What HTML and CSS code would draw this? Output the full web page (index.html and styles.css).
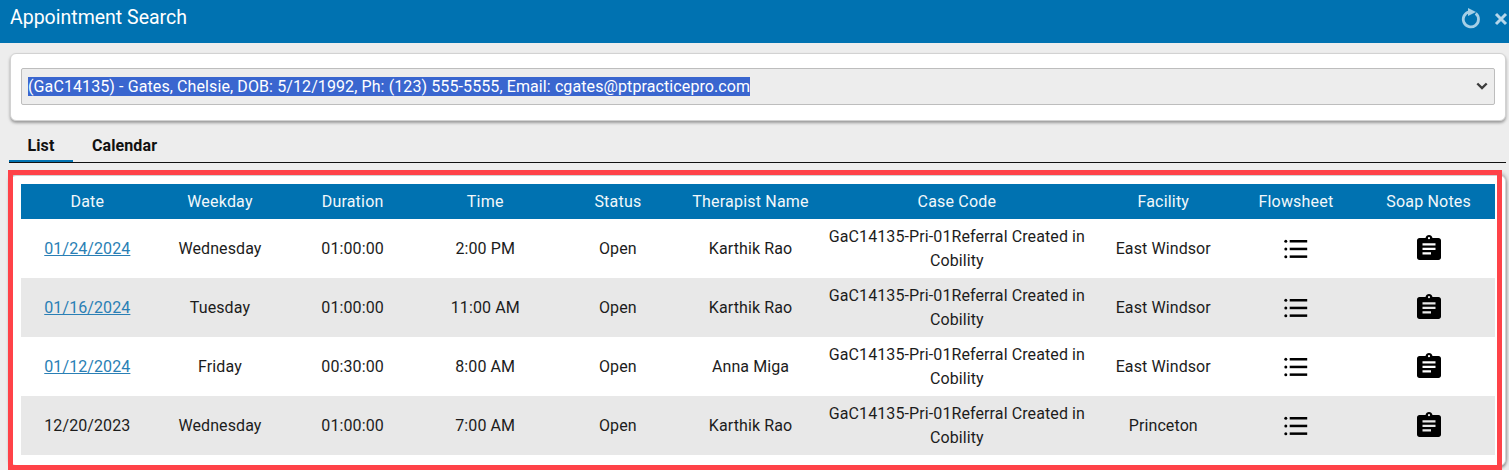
FILE: index.html
```html
<!DOCTYPE html>
<html lang="en">
<head>
<meta charset="utf-8">
<title>Appointment Search</title>
<link rel="stylesheet" href="styles.css">
</head>
<body>
<header class="titlebar">
  <h1 class="title">Appointment Search</h1>
  <div class="title-actions">
    <svg class="icon-refresh" viewBox="0 0 20 21" width="20" height="21"><path d="M8.500 3.800A7.600 7.600 0 1 0 14.700 5.400" fill="none" stroke="#a5cfe6" stroke-width="2.800"/><path d="M7 0L15 4L7 8Z" fill="#a5cfe6"/></svg>
    <svg class="icon-close" viewBox="0 0 14 14" width="14" height="14"><path d="M2 2L12 12M12 2L2 12" fill="none" stroke="#b5d6ea" stroke-width="3"/></svg>
  </div>
</header>
<main class="content">
  <section class="picker-card">
    <div class="picker">
      <span class="picker-value">(GaC14135) - Gates, Chelsie, DOB: 5/12/1992, Ph: (123) 555-5555, Email: cgates@ptpracticepro.com</span>
      <svg class="chevron" viewBox="0 0 12 8" width="12" height="8"><path d="M1.300 1.500L6 6L10.700 1.500" fill="none" stroke="#3c3c3c" stroke-width="2.400"/></svg>
    </div>
  </section>
  <nav class="tabs">
    <a class="tab tab-active">List</a>
    <a class="tab">Calendar</a>
  </nav>
  <section class="results">
    <table class="grid">
      <colgroup>
        <col class="c-std"><col class="c-std"><col class="c-std"><col class="c-std"><col class="c-std"><col class="c-std"><col class="c-case"><col class="c-std"><col class="c-std"><col class="c-std">
      </colgroup>
      <thead>
        <tr><th>Date</th><th>Weekday</th><th>Duration</th><th>Time</th><th>Status</th><th>Therapist Name</th><th>Case Code</th><th>Facility</th><th>Flowsheet</th><th>Soap Notes</th></tr>
      </thead>
      <tbody>
        <tr>
          <td><a class="date-link">01/24/2024</a></td><td>Wednesday</td><td>01:00:00</td><td>2:00 PM</td><td>Open</td><td>Karthik Rao</td><td>GaC14135-Pri-01Referral Created in Cobility</td><td>East Windsor</td>
          <td><svg class="icon" viewBox="0 0 24 24" width="24" height="24"><use href="#list"/></svg></td><td><svg class="icon icon-clip" viewBox="0 0 24 25" width="24" height="25"><use href="#clip"/></svg></td>
        </tr>
        <tr>
          <td><a class="date-link">01/16/2024</a></td><td>Tuesday</td><td>01:00:00</td><td>11:00 AM</td><td>Open</td><td>Karthik Rao</td><td>GaC14135-Pri-01Referral Created in Cobility</td><td>East Windsor</td>
          <td><svg class="icon" viewBox="0 0 24 24" width="24" height="24"><use href="#list"/></svg></td><td><svg class="icon icon-clip" viewBox="0 0 24 25" width="24" height="25"><use href="#clip"/></svg></td>
        </tr>
        <tr>
          <td><a class="date-link">01/12/2024</a></td><td>Friday</td><td>00:30:00</td><td>8:00 AM</td><td>Open</td><td>Anna Miga</td><td>GaC14135-Pri-01Referral Created in Cobility</td><td>East Windsor</td>
          <td><svg class="icon" viewBox="0 0 24 24" width="24" height="24"><use href="#list"/></svg></td><td><svg class="icon icon-clip" viewBox="0 0 24 25" width="24" height="25"><use href="#clip"/></svg></td>
        </tr>
        <tr>
          <td>12/20/2023</td><td>Wednesday</td><td>01:00:00</td><td>7:00 AM</td><td>Open</td><td>Karthik Rao</td><td>GaC14135-Pri-01Referral Created in Cobility</td><td>Princeton</td>
          <td><svg class="icon" viewBox="0 0 24 24" width="24" height="24"><use href="#list"/></svg></td><td><svg class="icon icon-clip" viewBox="0 0 24 25" width="24" height="25"><use href="#clip"/></svg></td>
        </tr>
      </tbody>
    </table>
  </section>
  <div class="highlight"></div>
</main>
<svg class="defs" width="0" height="0">
  <symbol id="list" viewBox="0 0 24 24">
    <circle cx="1.800" cy="4.300" r="1.500"/><circle cx="1.800" cy="12" r="1.500"/><circle cx="1.800" cy="19.700" r="1.500"/>
    <rect x="5.700" y="3" width="17.500" height="2.500"/><rect x="5.700" y="10.700" width="17.500" height="2.500"/><rect x="5.700" y="18.400" width="17.500" height="2.500"/>
  </symbol>
  <symbol id="clip" viewBox="0 0 24 25">
    <path fill-rule="evenodd" d="M2.500 3h6C8.900 1.200 10.300 0 12 0s3.100 1.200 3.500 3h6C22.900 3 24 4.100 24 5.500v17c0 1.400-1.100 2.500-2.500 2.500h-19C1.100 25 0 23.900 0 22.500v-17C0 4.100 1.100 3 2.500 3ZM12 2.100a1.100 1.100 0 1 0 0 2.200a1.100 1.100 0 0 0 0-2.200ZM5.500 8.300v2.200h13V8.300ZM5.500 12.800v2.200h13v-2.200ZM5.500 17.300v2.200h8.500v-2.200Z"/>
  </symbol>
</svg>
</body>
</html>
```
FILE: styles.css
```css
* { box-sizing: border-box; }
html, body { margin: 0; padding: 0; }
body {
  width: 1509px;
  height: 470px;
  overflow: hidden;
  background: #ededed;
  font-family: Roboto, "Liberation Sans", sans-serif;
  font-size: 16px;
  color: #1c1c1c;
}
.titlebar {
  height: 43px;
  background: #0072b1;
  display: flex;
  align-items: flex-start;
  justify-content: space-between;
  padding: 0 1px 0 10px;
}
.title {
  margin: 7px 0 0;
  font-size: 19.500px;
  line-height: 22px;
  font-weight: 400;
  color: #fff;
}
.title-actions {
  display: flex;
  align-items: center;
  gap: 13px;
  padding-top: 8px;
}
.content {
  position: relative;
  padding: 10px 3px 0 10px;
}
.picker-card {
  height: 68px;
  background: #fff;
  border: 1px solid #d2d2d2;
  border-radius: 6px;
  box-shadow: 0 2px 3px rgba(0, 0, 0, .35);
  padding: 14px 10px 0;
}
.picker {
  height: 37px;
  background: #ededed;
  border: 1px solid #bdbdbd;
  border-radius: 2px;
  display: flex;
  align-items: center;
  justify-content: space-between;
  padding: 0 6px 1px 6px;
}
.picker-value {
  background: #3a66cf;
  color: #fff;
  font-size: 16px;
  line-height: 19px;
  letter-spacing: .1px;
}
.tabs {
  display: flex;
  height: 42px;
  margin: 0 0 0 -1px;
  padding-top: 17px;
  border-bottom: 1px solid #111;
}
.tab {
  display: block;
  height: 24px;
  line-height: 16px;
  font-size: 16px;
  font-weight: 700;
  letter-spacing: .1px;
  color: #111;
  padding: 0 19px;
}
.tab-active {
  width: 64px;
  text-align: center;
  border-bottom: 2px solid #0072b1;
  padding: 0;
}
.results {
  margin-top: 12px;
  height: 291px;
  background: #fff;
  border: 1px solid #d2d2d2;
  border-radius: 6px;
  box-shadow: 0 -1px 4px rgba(0, 0, 0, .35), 0 2px 3px rgba(0, 0, 0, .35);
  padding: 8px 10px 0;
}
.grid {
  width: 1474px;
  border-collapse: collapse;
  table-layout: fixed;
  text-align: center;
}
.c-std { width: 132.600px; }
.c-case { width: 280px; }
.grid th {
  height: 35px;
  background: #0072b1;
  color: #f2f8fb;
  font-size: 16px;
  font-weight: 400;
  letter-spacing: .2px;
  padding: 0;
}
.grid td {
  height: 59px;
  padding: 0 8px;
  line-height: 23.500px;
  letter-spacing: .1px;
}
.grid tbody tr:nth-child(even) td { background: #e8e8e8; }
.date-link {
  color: #2a7fb5;
  text-decoration: underline;
}
.icon {
  display: block;
  margin: 0 auto;
  fill: #000;
}
.icon-clip {
  position: relative;
  top: -1px;
}
.highlight {
  position: absolute;
  left: 8px;
  top: 127px;
  width: 1494px;
  height: 300px;
  border: 5px solid #ff4248;
  pointer-events: none;
}
.defs { position: absolute; }
```
